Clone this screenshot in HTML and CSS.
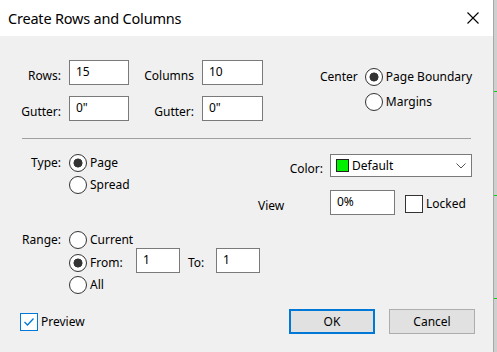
FILE: index.html
```html
<!DOCTYPE html>
<html>
<head>
<meta charset="utf-8">
<link rel="stylesheet" href="styles.css">
</head>
<body>
<div class="screen">
  <div class="dialog">
    <div class="titlebar">
      <span class="title">Create Rows and Columns</span>
      <svg class="close" width="12" height="12" viewBox="0 0 12 12"><path d="M0.5 0.5 L11.5 11.5 M11.5 0.5 L0.5 11.5" stroke="#000" stroke-width="1.1" fill="none"/></svg>
    </div>
    <div class="top">
      <div class="dims">
        <span class="lbl">Rows:</span><div class="field">15</div>
        <span class="lbl">Columns</span><div class="field">10</div>
        <span class="lbl">Gutter:</span><div class="field">0"</div>
        <span class="lbl">Gutter:</span><div class="field">0"</div>
      </div>
      <div class="center">
        <span class="center-lbl">Center</span>
        <div class="radios">
          <div class="radio checked">Page Boundary</div>
          <div class="radio">Margins</div>
        </div>
      </div>
    </div>
    <div class="sep"></div>
    <div class="mid">
      <div class="type">
        <span class="lbl type-lbl">Type:</span>
        <div class="radios tight">
          <div class="radio checked">Page</div>
          <div class="radio">Spread</div>
        </div>
      </div>
      <div class="props">
        <span class="lbl">Color:</span>
        <div class="select">
          <span class="swatch"></span><span class="sel-text">Default</span>
          <svg class="chev" width="10" height="6" viewBox="0 0 10 6"><polyline points="0.5,0.5 5,5 9.5,0.5" stroke="#555" stroke-width="1" fill="none"/></svg>
        </div>
        <span class="lbl view-lbl">View</span>
        <div class="view-row">
          <div class="field view-field">0%</div>
          <div class="check">Locked</div>
        </div>
      </div>
    </div>
    <div class="range">
      <span class="lbl range-lbl">Range:</span>
      <div class="range-opts">
        <div class="radio">Current</div>
        <div class="from-row">
          <div class="radio checked from">From:</div>
          <div class="field small">1</div>
          <span class="to">To:</span>
          <div class="field small">1</div>
        </div>
        <div class="radio">All</div>
      </div>
    </div>
    <div class="bottom">
      <div class="check preview">Preview</div>
      <div class="buttons">
        <button class="btn default">OK</button>
        <button class="btn">Cancel</button>
      </div>
    </div>
  </div>
  <div class="strip">
    <span class="tick t1"></span>
    <span class="tick t2"></span>
    <span class="tick t3"></span>
  </div>
</div>
</body>
</html>
```

FILE: styles.css
```css
* { box-sizing: border-box; }
html, body { margin: 0; padding: 0; }
body {
  font-family: "Noto Sans", "Open Sans", sans-serif;
  font-size: 12px;
  color: #000;
  background: #cdcdcd;
}
.screen {
  display: flex;
  width: 497px;
  height: 352px;
  overflow: hidden;
}
.dialog {
  width: 494px;
  height: 352px;
  background: #f0f0f0;
  border-right: 1px solid #a8a8a8;
  flex: none;
}
.strip {
  flex: 1;
  position: relative;
  background: #cfcfcf;
}
.tick {
  position: absolute;
  left: 0;
  right: 0;
  height: 1px;
  background: #19c819;
}
.t1 { top: 91px; }
.t2 { top: 195px; }
.t3 { top: 298px; }

.titlebar {
  height: 36px;
  background: #fff;
  display: flex;
  align-items: center;
  justify-content: space-between;
  padding: 0 14px 0 8px;
}
.title { font-size: 14.5px; letter-spacing: -0.2px; }
.close { display: block; }

.lbl { text-align: right; padding-top: 5px; white-space: nowrap; }

.field {
  background: #fff;
  border: 1px solid #7a7a7a;
  height: 25px;
  padding: 2px 0 0 6px;
  line-height: 18px;
}

.top {
  display: flex;
  margin-top: 24px;
}
.dims {
  display: grid;
  grid-template-columns: 61px 60px 57px 61px;
  grid-auto-rows: 25px;
  column-gap: 8px;
  row-gap: 11px;
  align-items: center;
}
.center {
  display: flex;
  margin-left: 57px;
  margin-top: 9px;
  gap: 7px;
}
.center-lbl { line-height: 16px; }
.radios {
  display: flex;
  flex-direction: column;
  gap: 9px;
}
.radios.tight { gap: 6px; }
.radio {
  display: flex;
  align-items: center;
  gap: 3px;
  height: 16px;
  line-height: 16px;
  white-space: nowrap;
}
.radio::before {
  content: "";
  width: 16px;
  height: 16px;
  border-radius: 50%;
  border: 1px solid #333;
  background: #fff;
  flex: none;
}
.radio.checked::before {
  background: radial-gradient(circle, #333 0 4.2px, #fff 4.8px);
}

.sep {
  margin: 17px 0 0 22px;
  width: 449px;
  height: 1px;
  background: #a0a0a0;
}

.mid {
  display: flex;
  margin-top: 15px;
}
.type {
  display: flex;
  width: 258px;
  gap: 8px;
  padding-top: 1px;
}
.type-lbl { width: 61px; padding-top: 0; line-height: 16px; }
.props {
  display: grid;
  grid-template-columns: 65px 142px;
  grid-template-rows: 23px 25px;
  column-gap: 7px;
  row-gap: 13px;
  align-items: center;
}
.view-lbl { text-align: left; }
.select {
  height: 23px;
  background: #fff;
  border: 1px solid #7a7a7a;
  display: flex;
  align-items: center;
  padding-left: 5px;
  padding-right: 5px;
}
.swatch {
  width: 13px;
  height: 13px;
  background: #00f000;
  border: 1px solid #222;
  flex: none;
}
.sel-text { margin-left: 3px; flex: 1; }
.chev { display: block; }
.view-row {
  display: flex;
  align-items: center;
  gap: 10px;
}
.view-field { width: 65px; flex: none; }
.check {
  display: flex;
  align-items: center;
  gap: 3px;
  white-space: nowrap;
  line-height: 16px;
  padding-top: 0;
}
.check::before {
  content: "";
  width: 16px;
  height: 16px;
  border: 1px solid #333;
  background: #fff;
  flex: none;
}
.view-row .check { margin-top: 2px; }
.check.preview::before {
  border-color: #0078d7;
  background: #fff url("data:image/svg+xml;utf8,<svg xmlns='http://www.w3.org/2000/svg' width='14' height='14' viewBox='0 0 14 14'><polyline points='2.5,7 5.5,10 11.5,3.5' fill='none' stroke='%230078d7' stroke-width='1.3'/></svg>") center/14px 14px no-repeat;
}

.range {
  display: flex;
  gap: 8px;
  margin-top: 17px;
}
.range-lbl { width: 61px; padding-top: 0; line-height: 16px; }
.range-opts {
  display: flex;
  flex-direction: column;
}
.from-row {
  display: flex;
  align-items: flex-start;
  height: 25px;
  margin-bottom: 4px;
}
.from-row .from { width: 67px; margin-top: 7px; }
.field.small { width: 44px; flex: none; }
.to { width: 28px; margin-left: 8px; padding-top: 7px; line-height: 16px; flex: none; }

.bottom {
  display: flex;
  align-items: center;
  margin-top: 16px;
  padding: 0 18px 0 20px;
}
.buttons {
  margin-left: auto;
  display: flex;
  gap: 14px;
}
.btn {
  width: 86px;
  height: 25px;
  font-family: inherit;
  font-size: 12px;
  color: #000;
  background: #e1e1e1;
  border: 1px solid #adadad;
  padding: 0;
}
.btn.default { border: 2px solid #0078d7; }
```
